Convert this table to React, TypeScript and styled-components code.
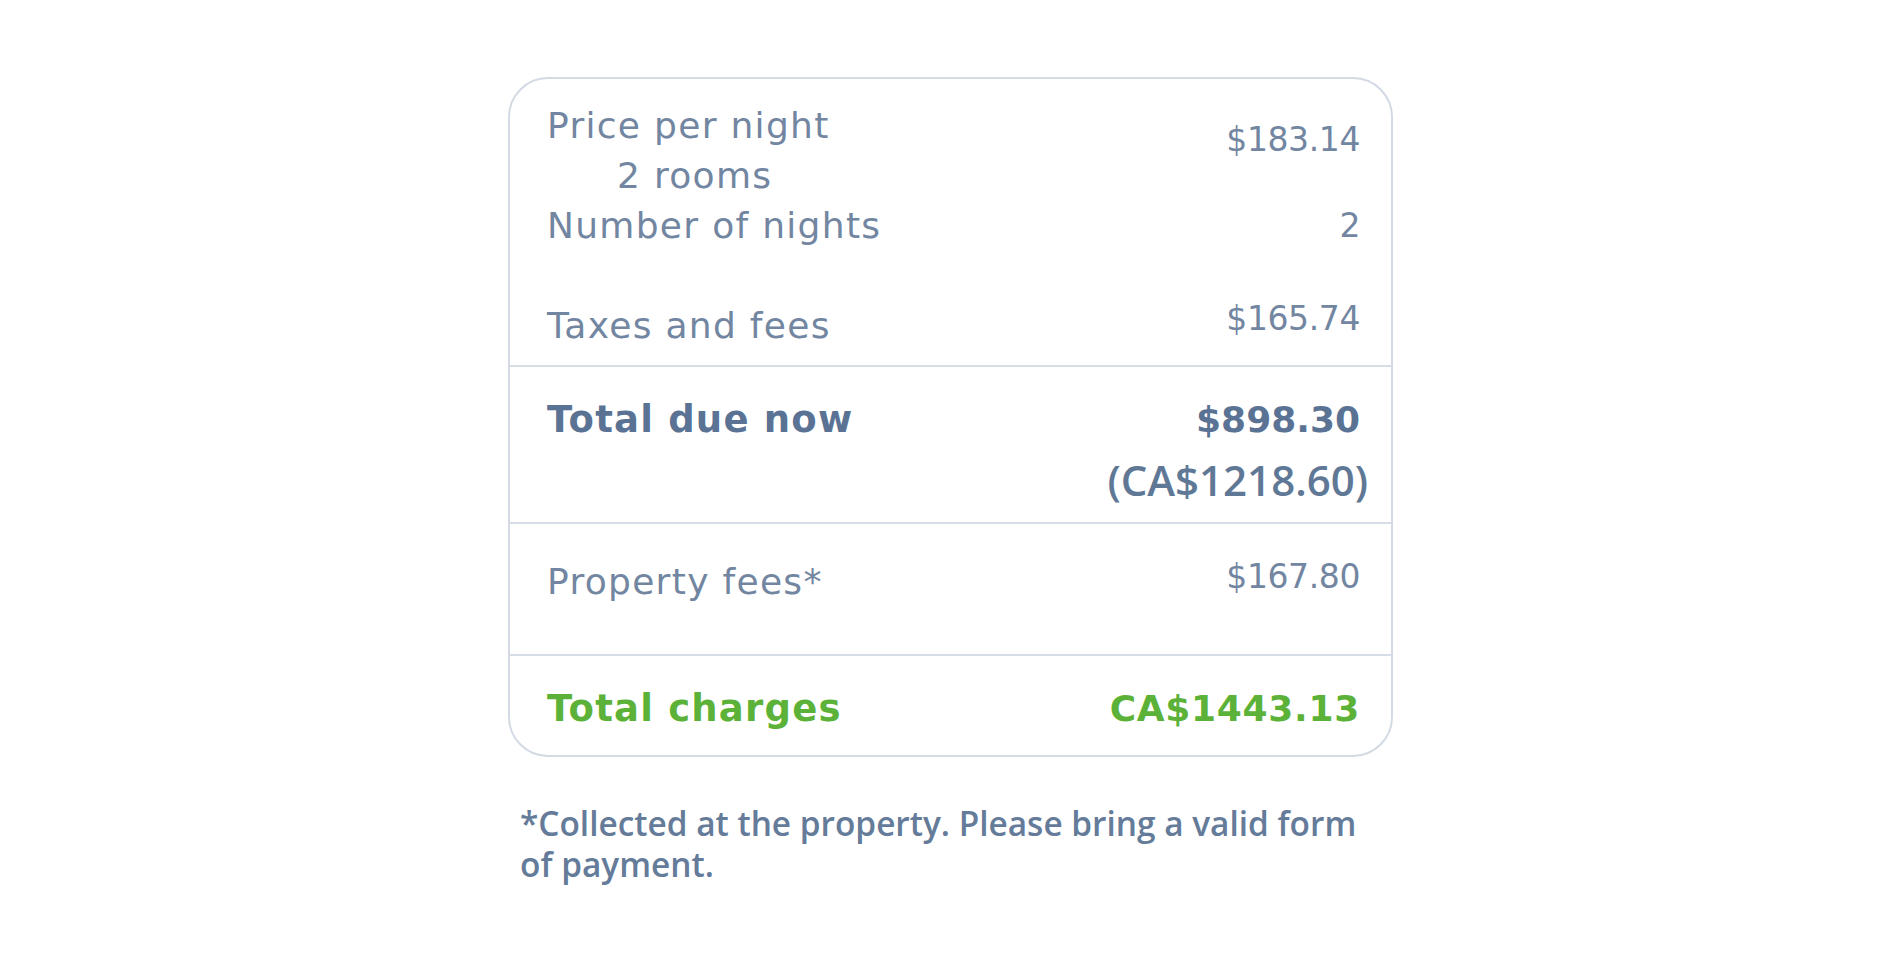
import React from "react";
import styled, { createGlobalStyle } from "styled-components";

const Global = createGlobalStyle`
  html, body { margin: 0; padding: 0; background: #ffffff; }
  body { font-family: "DejaVu Sans", "Noto Sans", sans-serif; }
`;

const Page = styled.div`
  width: 1880px;
  height: 960px;
  padding: 77px 0 0 508px;
  box-sizing: border-box;
`;

const Card = styled.div`
  width: 885px;
  box-sizing: border-box;
  border: 2px solid #d3dae3;
  border-radius: 40px;
  overflow: hidden;
`;

const Section = styled.div<{ $pt: number; $pb: number; $divider?: boolean }>`
  padding: ${(p) => p.$pt}px 31px ${(p) => p.$pb}px 37px;
  border-top: ${(p) => (p.$divider ? "2px solid #d6dde6" : "none")};
  display: flex;
  flex-direction: column;
`;

const Row = styled.div<{ $mt?: number }>`
  display: flex;
  justify-content: space-between;
  align-items: flex-start;
  margin-top: ${(p) => p.$mt ?? 0}px;
`;

const Label = styled.div<{ $bold?: boolean; $green?: boolean }>`
  font-size: ${(p) => (p.$bold ? 37 : 36)}px;
  line-height: 50px;
  font-weight: ${(p) => (p.$bold ? 700 : 400)};
  color: ${(p) => (p.$green ? "#5cb238" : p.$bold ? "#5a7394" : "#7286a1")};
  letter-spacing: ${(p) => (p.$bold ? "1.2px" : "1.3px")};
  white-space: nowrap;
`;

const SubLabel = styled(Label)`
  padding-left: 70px;
`;

const ValueCol = styled.div`
  display: flex;
  flex-direction: column;
  align-items: flex-end;
`;

const Value = styled.div<{ $bold?: boolean; $green?: boolean; $shift?: number }>`
  font-size: ${(p) => (p.$bold ? 36 : 33)}px;
  line-height: 50px;
  font-weight: ${(p) => (p.$bold ? 700 : 400)};
  color: ${(p) => (p.$green ? "#5cb238" : p.$bold ? "#5a7394" : "#7286a1")};
  letter-spacing: ${(p) => (p.$green ? "0.7px" : p.$bold ? "0" : "-0.4px")};
  margin-top: ${(p) => p.$shift ?? 0}px;
  white-space: nowrap;
`;

const Converted = styled.div`
  font-family: "Open Sans", "Noto Sans", sans-serif;
  font-weight: 600;
  font-size: 42px;
  line-height: 50px;
  color: #5f7896;
  margin-top: 10px;
  margin-right: -8px;
  white-space: nowrap;
`;

const Note = styled.p`
  margin: 46px 0 0 12px;
  width: 850px;
  font-family: "Open Sans", "Noto Sans", sans-serif;
  font-weight: 600;
  font-size: 33.4px;
  line-height: 41px;
  color: #647b99;
`;

export default function App() {
  return (
    <>
      <Global />
      <Page>
        <Card>
          <Section $pt={22} $pb={14}>
            <Row>
              <div>
                <Label>Price per night</Label>
                <SubLabel>2 rooms</SubLabel>
              </div>
              <Value $shift={14}>$183.14</Value>
            </Row>
            <Row>
              <Label>Number of nights</Label>
              <Value>2</Value>
            </Row>
            <Row $mt={50}>
              <Label>Taxes and fees</Label>
              <Value $shift={-7}>$165.74</Value>
            </Row>
          </Section>
          <Section $divider $pt={28} $pb={17}>
            <Row>
              <Label $bold>Total due now</Label>
              <ValueCol>
                <Value $bold>$898.30</Value>
                <Converted>(CA$1218.60)</Converted>
              </ValueCol>
            </Row>
          </Section>
          <Section $divider $pt={33} $pb={47}>
            <Row>
              <Label>Property fees*</Label>
              <Value $shift={-5}>$167.80</Value>
            </Row>
          </Section>
          <Section $divider $pt={28} $pb={21}>
            <Row>
              <Label $bold $green>Total charges</Label>
              <Value $bold $green>CA$1443.13</Value>
            </Row>
          </Section>
        </Card>
        <Note>*Collected at the property. Please bring a valid form of payment.</Note>
      </Page>
    </>
  );
}
